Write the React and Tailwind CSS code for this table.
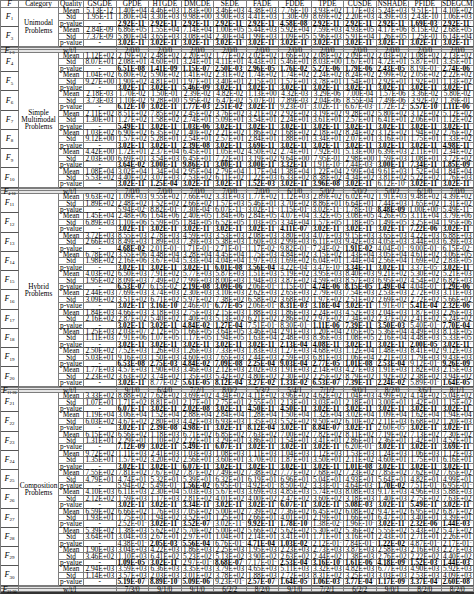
import React from 'react';

const methods = ['GSGDE', 'GPDE', 'HTGDE', 'DMCDE', 'SEDE', 'FADE', 'FDDE', 'TPDE', 'CUSDE', 'NSHADE', 'PFIDE', 'SDEGCM'];

const groups = [
  {
    cat: ['Unimodal', 'Problems'],
    span: 'row-span-[6]',
    label: '1-3',
    wtl: '2/0/0 2/0/0 2/0/0 2/0/0 2/0/0 2/0/0 2/0/0 2/0/0 2/0/0 2/0/0 2/0/0',
    fs: [
      ['1',
        '5.13E-12 1.40E+04 4.46E+03 1.83E+00 3.46E+03 4.38E+03 7.76E-10 3.93E+02 1.17E+03 5.24E+03 9.51E-11 4.10E+02',
        '1.95E-11 1.80E+04 3.30E+03 9.98E+00 3.90E+03 4.41E+03 1.30E-09 8.69E+02 2.20E+03 4.39E+03 2.43E-10 1.06E+03',
        '*2.92E-11 *2.92E-11 *2.92E-11 *2.92E-11 *2.92E-11 *4.58E-08 *2.92E-11 *2.92E-11 *2.92E-11 *1.69E-03 *2.92E-11'],
      ['3',
        '2.84E-09 6.86E+05 1.55E+04 7.14E+04 1.00E+05 5.44E+03 5.92E+04 7.59E+03 4.93E+05 4.17E+06 8.15E-02 2.68E+05',
        '7.37E-09 5.80E+04 3.65E+03 3.08E+04 2.30E+04 1.99E+03 1.09E+05 5.96E+03 5.91E+04 1.26E+05 1.25E-01 6.14E+04',
        '*3.02E-11 *3.02E-11 *3.02E-11 *3.02E-11 *3.02E-11 *3.02E-11 *3.02E-11 *3.02E-11 *3.02E-11 *3.02E-11 *3.02E-11'],
    ],
  },
  {
    cat: ['Simple', 'Multimodal', 'Problems'],
    span: 'row-span-[21]',
    label: '4-10',
    wtl: '7/0/0 7/0/0 7/0/0 7/0/0 7/0/0 6/1/0 5/0/2 5/0/2 5/0/2 6/1/0 7/0/0',
    fs: [
      ['4',
        '1.12E+02 2.19E+02 2.48E+02 2.20E+02 1.77E+02 2.02E+02 1.66E+02 2.08E+02 2.09E+02 2.03E+02 1.08E+02 2.13E+02',
        '8.07E+01 2.08E+01 4.60E+01 3.24E+01 4.11E+01 4.43E+01 5.46E+01 8.03E+00 1.67E+01 4.72E+01 5.87E+01 3.35E+01',
        '*6.51E-08 *1.41E-09 *1.15E-07 *2.50E-03 *2.96E-05 *1.76E-02 *5.27E-06 *1.79E-06 *2.43E-05 8.19E-01 *2.74E-06'],
      ['5',
        '1.04E+02 6.80E+02 5.90E+02 1.41E+02 2.31E+02 1.74E+02 1.74E+02 2.24E+02 8.24E+02 2.99E+02 2.05E+02 2.22E+02',
        '9.27E+00 1.90E+02 4.81E+01 1.97E+01 3.40E+01 2.15E+01 1.57E+01 3.78E+01 1.54E+01 2.92E+01 1.92E+01 1.13E+02',
        '*3.02E-11 *3.02E-11 *5.46E-09 *3.02E-11 *3.02E-11 *3.02E-11 *3.02E-11 *3.02E-11 *3.02E-11 *3.02E-11 *3.02E-11'],
      ['6',
        '2.18E-03 1.70E-02 1.50E-01 2.39E-02 4.82E-02 1.13E+00 4.32E-03 3.29E-06 7.00E-04 1.57E-06 3.36E-02 5.80E-02',
        '3.73E-03 1.10E-02 9.28E+00 5.95E-02 6.47E-02 5.07E-01 7.89E-03 2.04E-06 8.55E-04 7.49E-06 3.92E-02 1.39E-01',
        '*6.12E-10 *3.02E-11 *1.77E-03 *2.51E-02 *3.02E-11 9.23E-01 3.02E-11 6.67E-03 1.72E-12 *5.57E-10 *1.11E-06'],
      ['7',
        '2.11E+02 8.51E+02 7.85E+02 2.45E+02 3.76E+02 3.21E+02 2.92E+02 3.19E+02 9.28E+02 5.80E+02 3.12E+02 5.12E+02',
        '1.30E+01 1.27E+02 1.58E+02 2.74E+01 5.09E+01 3.54E+01 2.24E+01 3.61E+01 2.57E+01 6.41E+01 2.06E+01 1.12E+02',
        '*5.49E-11 *3.02E-11 *1.03E-06 *3.02E-11 *3.02E-11 *3.02E-11 *3.02E-11 *3.02E-11 *3.02E-11 *3.02E-11 *3.02E-11'],
      ['8',
        '1.03E+02 6.90E+02 6.35E+02 1.40E+02 2.21E+02 1.86E+02 1.68E+02 2.18E+02 8.24E+02 3.12E+02 1.94E+02 2.76E+02',
        '9.12E+00 1.57E+02 5.28E+01 2.54E+01 2.57E+01 2.84E+01 1.88E+01 3.34E+01 2.07E+01 3.16E+01 1.75E+01 1.33E+02',
        '*3.02E-11 *3.02E-11 *2.39E-08 *3.02E-11 *3.69E-11 *3.02E-11 *3.02E-11 *3.02E-11 *3.02E-11 *3.02E-11 *4.98E-11'],
      ['9',
        '4.42E+00 1.72E+01 2.37E+04 6.45E+01 1.05E+02 4.50E+02 2.74E+01 7.92E-01 5.13E+00 6.39E+03 2.11E+01 2.34E+02',
        '2.03E+00 6.69E+01 3.54E+03 6.45E+01 7.22E+01 3.19E+02 9.64E+00 7.95E-01 2.98E+00 1.59E+03 1.08E+01 3.72E+02',
        '*3.64E-02 *3.00E-11 *9.86E-11 *3.00E-11 *3.00E-11 *3.32E-11 1.91E-10 7.44E-03 *3.00E-11 *7.34E-11 *1.85E-09'],
      ['10',
        '1.08E+04 3.02E+04 1.34E+04 2.95E+04 2.79E+04 1.17E+04 1.38E+04 1.22E+04 2.99E+04 9.61E+03 1.52E+04 1.84E+04',
        '5.53E+02 4.40E+02 3.07E+03 7.53E+02 6.11E+02 1.22E+03 6.33E+02 8.38E+02 4.34E+02 3.81E+02 5.22E+02 1.76E+03',
        '*3.02E-11 *1.25E-04 *3.02E-11 *3.02E-11 *1.52E-03 *3.02E-11 *3.96E-08 *3.02E-11 6.12E-10 *3.02E-11 *3.02E-11'],
    ],
  },
  {
    cat: ['Hybrid', 'Problems'],
    span: 'row-span-[30]',
    label: '11-20',
    wtl: '9/1/0 6/4/0 7/2/1 8/0/2 5/3/2 5/4/1 7/1/2 9/0/1 8/2/0 3/6/1 8/1/1',
    fs: [
      ['11',
        '9.63E+02 1.09E+03 9.55E+02 7.66E+02 3.31E+03 1.77E+02 1.12E+03 2.89E+02 6.02E+02 1.91E+03 9.48E+02 4.39E+02',
        '1.89E+02 2.48E+02 1.52E+02 2.66E+02 1.57E+03 5.46E+01 3.70E+02 8.86E+01 6.64E+01 7.44E+03 1.65E+02 1.31E+02',
        '5.94E-02 8.82E-01 7.30E-04 6.07E-11 3.02E-11 1.15E-01 3.02E-11 1.78E-10 *8.48E-09 1.00E+00 5.49E-11'],
      ['12',
        '1.45E+04 2.48E+06 1.64E+06 2.40E+05 1.84E+06 2.84E+05 4.07E+04 3.32E+05 3.08E+05 4.26E+05 3.11E+04 3.79E+06',
        '6.89E+03 1.10E+06 5.59E+05 1.84E+05 6.52E+05 1.03E+05 3.34E+04 1.57E+05 1.18E+05 1.49E+05 3.25E+04 1.95E+06',
        '*3.02E-11 *3.02E-11 *3.02E-11 *3.02E-11 *3.02E-11 *4.11E-07 *3.02E-11 *3.02E-11 *3.02E-11 *7.22E-06 *3.02E-11'],
      ['13',
        '3.72E+03 8.55E+03 2.78E+03 4.59E+03 3.53E+03 2.08E+03 3.80E+03 4.07E+03 9.15E+03 3.65E+03 4.22E+03 6.88E+03',
        '2.66E+03 8.49E+03 1.89E+03 7.39E+03 5.38E+03 1.60E+03 2.99E+03 6.11E+03 9.42E+03 4.05E+03 3.44E+03 6.39E+03',
        '*4.68E-02 2.01E-01 1.71E-01 2.71E-01 1.17E-02 9.82E-01 7.24E-02 *1.91E-02 4.04E-01 9.00E-01 6.15E-02'],
      ['14',
        '6.78E+02 3.55E+06 4.48E+04 3.28E+04 4.45E+04 1.75E+03 4.84E+02 3.15E+02 1.43E+04 3.05E+04 4.61E+02 3.06E+05',
        '1.98E+02 2.16E+06 3.67E+04 5.33E+04 4.04E+04 1.97E+03 1.69E+02 6.04E+01 1.44E+04 2.56E+04 1.69E+02 2.83E+05',
        '*3.02E-11 *3.02E-11 *3.02E-11 *6.01E-08 *3.56E-04 4.22E-04 3.47E-10 *3.34E-11 *3.02E-11 3.37E-05 *3.02E-11'],
      ['15',
        '4.03E+02 6.50E+03 7.91E+02 5.77E+03 5.87E+03 1.51E+03 5.19E+02 3.95E+03 8.40E+03 9.21E+02 5.30E+02 5.21E+03',
        '1.95E+02 8.09E+03 7.49E+02 7.99E+03 8.00E+03 1.94E+03 3.87E+02 4.59E+03 8.57E+03 6.95E+02 4.54E+02 6.82E+03',
        '*6.53E-07 6.15E-02 *2.19E-08 *3.09E-06 2.06E-01 1.15E-01 *4.74E-06 *8.15E-05 *1.49E-04 4.04E-01 *1.29E-06'],
      ['16',
        '2.44E+03 7.69E+03 3.74E+03 2.30E+03 3.10E+03 2.62E+03 2.65E+03 2.79E+03 7.54E+03 2.53E+03 2.72E+03 3.11E+03',
        '3.09E+02 3.51E+02 6.71E+02 5.97E+02 7.38E+02 6.58E+02 3.68E+02 1.97E+02 2.51E+02 2.69E+02 2.72E+02 5.66E+02',
        '*3.02E-11 *3.16E-10 2.46E-01 *6.77E-05 2.06E-01 *8.31E-03 *3.18E-04 *3.02E-11 1.91E-01 *5.41E-04 *2.32E-06'],
      ['17',
        '1.84E+03 4.66E+03 3.18E+03 2.75E+03 2.15E+03 1.88E+03 1.86E+03 2.24E+03 4.52E+03 2.04E+03 1.87E+03 2.26E+03',
        '2.16E+02 2.87E+02 5.40E+02 1.40E+03 5.13E+02 6.21E+02 2.86E+02 2.97E+02 7.34E+02 2.37E+02 2.41E+02 5.24E+02',
        '*3.02E-11 *3.02E-11 *4.84E-02 *1.27E-04 7.51E-01 8.30E-01 *1.11E-06 *7.39E-11 *3.50E-03 5.40E-01 *7.70E-04'],
      ['18',
        '1.25E+03 2.03E+07 2.12E+05 1.66E+05 3.64E+05 3.46E+04 2.91E+03 1.20E+04 2.05E+05 5.36E+04 4.49E+03 8.13E+05',
        '1.11E+03 7.91E+06 1.07E+05 1.17E+05 1.94E+05 1.63E+04 2.48E+03 8.36E+03 1.08E+05 2.16E+04 4.48E+03 5.33E+05',
        '*3.02E-11 *3.02E-11 *3.02E-11 *3.02E-11 *3.02E-11 *2.13E-04 *4.08E-11 *3.02E-11 *3.02E-11 *2.00E-05 *3.02E-11'],
      ['19',
        '2.50E+02 7.52E+03 1.26E+03 1.26E+03 7.33E+03 1.83E+03 1.27E+03 4.68E+03 1.12E+04 1.48E+03 8.41E+02 9.12E+03',
        '5.03E+01 9.16E+03 1.50E+03 4.60E+03 7.65E+03 2.44E+03 2.59E+03 6.81E+03 1.06E+04 2.21E+03 1.79E+03 9.43E+03',
        '*6.53E-08 *2.75E-03 *4.84E-02 *7.09E-08 *2.25E-04 *9.03E-04 *2.77E-05 *1.01E-08 *2.53E-04 9.12E-01 *9.26E-09'],
      ['20',
        '1.77E+03 4.57E+03 1.90E+03 3.46E+03 2.12E+03 2.02E+03 1.91E+03 2.14E+03 4.27E+03 1.91E+03 1.82E+03 2.15E+03',
        '2.23E+02 3.63E+02 3.74E+02 1.35E+03 5.42E+02 4.80E+02 2.30E+02 2.25E+02 8.79E+02 1.92E+02 2.38E+02 3.94E+02',
        '*3.02E-11 8.77E-02 *5.61E-05 *8.12E-04 *3.27E-02 *1.33E-02 *6.53E-07 *7.39E-11 *2.24E-02 5.89E-01 *1.64E-05'],
    ],
  },
  {
    cat: ['Composition', 'Problems'],
    span: 'row-span-[30]',
    label: '21-30',
    wtl: '7/3/0 9/1/0 9/1/0 6/2/2 8/2/0 9/1/0 7/2/1 6/2/2 9/0/1 8/2/0 8/2/0',
    fs: [
      ['21',
        '3.33E+02 8.88E+02 7.62E+02 3.69E+02 4.34E+02 4.11E+02 3.96E+02 4.62E+02 1.04E+03 4.99E+02 4.14E+02 5.04E+02',
        '1.07E+01 1.71E+02 8.81E+01 2.17E+01 2.75E+01 2.55E+01 2.13E+01 3.03E+01 2.18E+01 3.00E+01 1.42E+01 1.15E+02',
        '*6.07E-11 *3.02E-11 *2.02E-08 *3.02E-11 *4.50E-11 *4.50E-11 *3.02E-11 *3.02E-11 *3.02E-11 *3.02E-11 *3.02E-11'],
      ['22',
        '1.19E+04 3.06E+04 1.52E+04 2.88E+04 2.84E+04 1.28E+04 1.50E+04 1.32E+04 3.02E+04 1.09E+04 1.62E+04 1.94E+04',
        '6.03E+02 4.67E+02 2.80E+03 4.42E+03 6.93E+03 1.35E+03 5.52E+02 9.50E+02 6.10E+02 2.11E+03 6.68E+02 1.20E+03',
        '*3.02E-11 *2.39E-08 *4.98E-11 *3.02E-11 *8.12E-04 *3.02E-11 *8.84E-07 *3.02E-11 2.60E-05 *3.02E-11 *3.02E-11'],
      ['23',
        '6.15E+02 6.56E+02 1.18E+03 6.71E+02 6.85E+02 7.63E+02 7.00E+02 7.82E+02 8.11E+02 7.19E+02 7.13E+02 7.30E+02',
        '1.31E+01 2.29E+01 1.10E+02 2.22E+01 3.29E+01 3.86E+01 1.54E+01 3.41E+01 2.86E+01 2.36E+01 1.42E+01 4.52E+01',
        '*7.12E-09 *3.02E-11 *5.49E-11 *6.07E-11 *3.02E-11 *3.02E-11 *3.02E-11 6.20E-01 *3.02E-11 *3.02E-11 *3.69E-11'],
      ['24',
        '9.72E+02 1.11E+03 2.41E+03 1.03E+03 1.08E+03 1.11E+03 1.04E+03 1.12E+03 1.53E+03 1.24E+03 1.06E+03 1.12E+03',
        '1.35E+01 1.57E+02 3.20E+02 2.56E+01 3.60E+01 3.70E+01 1.87E+01 3.50E+01 2.11E+02 4.60E+01 1.75E+01 6.16E+01',
        '*3.02E-11 *3.02E-11 *6.07E-11 *3.02E-11 *3.02E-11 *3.02E-11 *3.02E-11 *1.01E-08 *3.02E-11 *3.02E-11 *3.02E-11'],
      ['25',
        '7.55E+02 7.81E+02 7.67E+02 7.87E+02 7.49E+02 7.38E+02 7.77E+02 7.68E+02 7.23E+02 7.85E+02 7.62E+02 7.65E+02',
        '4.79E+01 4.74E+01 5.32E+01 5.39E+01 6.32E+01 6.19E+01 6.96E+01 5.04E+01 4.93E+01 5.64E+01 4.82E+01 4.99E+01',
        '5.94E-02 5.49E-01 *1.56E-02 6.95E-01 4.92E-01 8.50E-02 3.33E-01 4.64E-03 *1.70E-02 7.51E-01 6.95E-01'],
      ['26',
        '4.10E+03 6.11E+03 2.30E+04 5.03E+03 5.67E+03 3.69E+03 4.85E+03 5.74E+03 8.08E+03 9.17E+03 4.96E+03 5.88E+03',
        '2.12E+02 1.59E+03 1.17E+03 2.81E+02 4.01E+02 4.00E+02 2.47E+02 3.60E+02 3.18E+03 1.40E+03 2.75E+02 7.63E+02',
        '*3.02E-11 *3.02E-11 *3.34E-11 *3.02E-11 *3.02E-11 *6.07E-11 *3.02E-11 *5.08E-03 *3.02E-11 *5.49E-11 *3.02E-11'],
      ['27',
        '6.59E+02 6.66E+02 1.76E+03 7.05E+02 5.00E+02 7.39E+02 7.36E+02 6.45E+02 6.08E+02 9.47E+02 6.95E+02 6.87E+02',
        '1.93E+01 1.75E+01 1.94E+02 3.52E+01 1.25E+01 2.66E+01 4.01E+01 2.19E+01 1.66E+01 6.47E+01 3.40E+01 3.39E+01',
        '2.52E-01 *3.02E-11 *3.52E-07 3.02E-11 *9.92E-11 *1.78E-10 1.38E-02 1.96E-10 *3.02E-11 *2.32E-06 *1.44E-03'],
      ['28',
        '5.39E+02 1.38E+03 5.62E+02 5.70E+02 5.00E+02 5.66E+02 5.62E+02 5.30E+02 5.36E+02 5.55E+02 5.43E+02 5.47E+02',
        '3.64E+01 3.04E+03 2.67E+01 2.97E+01 1.04E+01 2.14E+01 3.41E+01 1.71E+01 3.16E+01 2.43E+01 2.71E+01 2.26E+01',
        '4.38E-01 *2.05E-03 *5.56E-04 6.76E-01 *4.71E-04 *1.03E-02 2.12E-01 7.84E-01 *1.22E-02 4.87E-01 2.17E-01'],
      ['29',
        '1.90E+03 3.04E+03 4.22E+03 1.86E+03 2.25E+03 1.95E+03 2.23E+03 2.73E+03 3.87E+03 2.58E+03 2.16E+03 2.27E+03',
        '3.46E+02 1.10E+03 6.41E+02 5.23E+02 5.13E+02 3.90E+02 2.63E+02 2.44E+02 1.38E+03 2.76E+02 2.22E+02 4.40E+02',
        '*1.09E-05 *3.02E-11 2.97E-01 *8.68E-07 7.17E-01 *2.53E-04 *3.16E-10 *1.61E-06 *4.18E-09 *1.52E-03 *1.44E-03'],
      ['30',
        '2.94E+03 3.59E+03 6.36E+03 3.35E+03 3.79E+03 4.65E+03 5.11E+03 3.32E+03 4.82E+03 6.77E+03 4.90E+03 5.92E+03',
        '1.14E+03 3.57E+03 2.03E+03 3.01E+02 3.78E+02 1.88E+03 2.72E+03 8.31E+02 3.25E+03 3.03E+03 2.53E+03 4.09E+03',
        '*5.19E-07 *8.89E-10 *5.09E-06 9.23E-01 *2.57E-07 *1.64E-05 *1.06E-03 *3.77E-04 *1.17E-09 *3.37E-04 *2.60E-08'],
    ],
  },
];

const cell = 'flex items-center justify-center border-r border-b border-[#7d7d7d] whitespace-nowrap leading-none';
// p-value rows close a block with a darker rule
const last = 'border-b-[#555]';
const wtlCell = 'border-t-[3px] border-double border-t-[#7d7d7d] bg-[#e6e6e6]';

function FLabel({ n, small }) {
  return (
    <span className="italic">
      F<sub className={small ? 'text-[4px] not-italic' : 'text-[5px] not-italic'}>{n}</sub>
    </span>
  );
}

function PValue({ v }) {
  const bold = v.startsWith('*');
  const text = bold ? v.slice(1) : v;
  return (
    <span className={bold ? 'font-bold' : ''}>
      {text}
      <sup className="text-[4px] font-normal">{bold ? '+' : '='}</sup>
    </span>
  );
}

export default function App() {
  const cells = [];

  // header
  cells.push(<div key="h-f" className={`${cell} italic`}>F</div>);
  cells.push(<div key="h-c" className={cell}>Category</div>);
  cells.push(<div key="h-q" className={cell}>Quality</div>);
  methods.forEach((m) => cells.push(<div key={`h-${m}`} className={cell}>{m}</div>));

  groups.forEach((g) => {
    g.fs.forEach(([n, mean, std, p], i) => {
      cells.push(
        <div key={`f${n}`} className={`${cell} ${last} row-span-3 text-[8px]`}>
          <FLabel n={n} />
        </div>
      );
      if (i === 0) {
        cells.push(
          <div key={`cat-${g.label}`} className={`${cell} ${g.span} flex-col leading-[6.5px]`}>
            {g.cat.map((c) => <span key={c}>{c}</span>)}
          </div>
        );
      }
      cells.push(<div key={`f${n}-qm`} className={cell}>Mean</div>);
      mean.split(' ').forEach((v, j) => cells.push(<div key={`f${n}-m${j}`} className={cell}>{v}</div>));
      cells.push(<div key={`f${n}-qs`} className={cell}>Std</div>);
      std.split(' ').forEach((v, j) => cells.push(<div key={`f${n}-s${j}`} className={cell}>{v}</div>));
      cells.push(<div key={`f${n}-qp`} className={`${cell} ${last}`}>p-value</div>);
      cells.push(<div key={`f${n}-p0`} className={`${cell} ${last}`}>-</div>);
      p.split(' ').forEach((v, j) => cells.push(
        <div key={`f${n}-p${j + 1}`} className={`${cell} ${last}`}><PValue v={v} /></div>
      ));
    });

    // w/t/l summary row
    cells.push(
      <div key={`w-${g.label}`} className={`${cell} ${wtlCell} text-[8px]`}>
        <FLabel n={g.label} small />
      </div>
    );
    cells.push(
      <div key={`wl-${g.label}`} className={`${cell} ${wtlCell} col-span-3 justify-start pl-[44px]`}>w/t/l</div>
    );
    g.wtl.split(' ').forEach((v, j) => cells.push(
      <div key={`w-${g.label}-${j}`} className={`${cell} ${wtlCell}`}>{v}</div>
    ));
  });

  return (
    <div className="h-[594px] w-[474px] overflow-hidden bg-white">
      <div className="grid h-[594px] w-[474px] grid-cols-[18px_40px_25px_repeat(12,minmax(0,1fr))] grid-rows-[7px_repeat(91,minmax(0,1fr))] border-t border-l border-b-2 border-[#7d7d7d] border-b-[#333] font-['Liberation_Serif','Times_New_Roman',serif] text-[7.3px] text-black">
        {cells}
      </div>
    </div>
  );
}
